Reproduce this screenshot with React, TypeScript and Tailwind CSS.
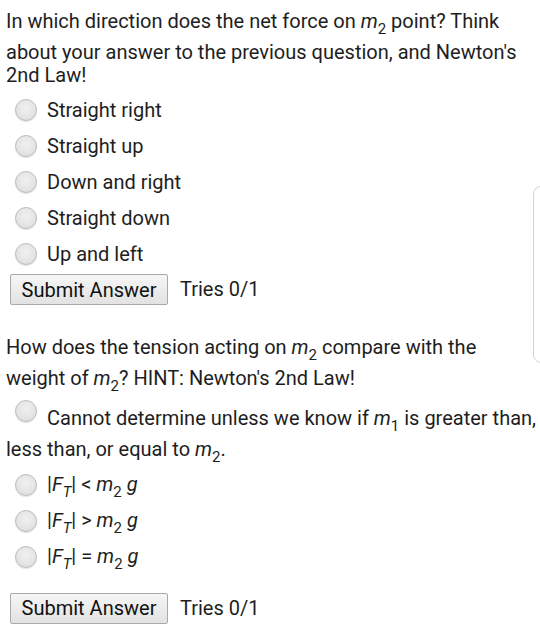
import type { ReactNode } from 'react';

const firstOptions = ['Straight right', 'Straight up', 'Down and right', 'Straight down', 'Up and left'];

// Italic variable with a subscript, e.g. m₂. By default the subscript pushes the line box down;
// `flat` keeps it out of the line height.
function Var({ v, sub, flat }: { v: string; sub?: string; flat?: boolean }) {
  return (
    <span>
      <i>{v}</i>
      {sub && (
        <sub className={`static text-[15px] align-[-6px] not-italic ${flat ? 'leading-[0px]' : 'leading-[23px]'}`}>
          {sub}
        </sub>
      )}
    </span>
  );
}

function Radio() {
  return (
    <span className="inline-block w-[22px] h-[22px] rounded-full border border-[#bcbcbc] bg-[radial-gradient(circle_at_50%_40%,#f0f0f0_0%,#e4e4e4_60%,#d6d6d6_100%)] shadow-[0_1px_1px_rgba(0,0,0,0.12)] shrink-0" />
  );
}

function Option({ children }: { children: ReactNode }) {
  return (
    <label className="flex items-center h-[36px] pl-[15px]">
      <Radio />
      <span className="ml-[10px]">{children}</span>
    </label>
  );
}

function SubmitRow() {
  return (
    <div className="flex items-center h-[31px] pl-[10px]">
      <button className="h-[31px] w-[158px] border border-[#a9a9a9] rounded-[2px] bg-[linear-gradient(#f6f6f6,#e2e2e2)] text-[#111] leading-none">
        Submit Answer
      </button>
      <span className="ml-[12px]">Tries 0/1</span>
    </div>
  );
}

function Force({ op }: { op: string }) {
  return (
    <span>
      |<i>F</i>
      <sub className="static text-[15px] leading-[0px] align-[-6px] italic">T</sub>| {op} <Var v="m" sub="2" flat />{' '}
      <i>g</i>
    </span>
  );
}

export default function App() {
  return (
    <div className="relative w-[540px] h-[643px] bg-white text-[#1e1e1e] text-[20px] leading-[23px] font-['Roboto','Liberation_Sans',sans-serif] overflow-hidden">
      <p className="pt-[10px] px-[6px]">
        In which direction does the net force on <Var v="m" sub="2" /> point? Think about your answer to the previous
        question, and Newton's 2nd Law!
      </p>

      <div className="mt-[5px]">
        {firstOptions.map((o) => (
          <Option key={o}>{o}</Option>
        ))}
      </div>

      <div className="mt-[2px]">
        <SubmitRow />
      </div>

      <p className="pt-[31px] px-[6px]">
        How does the tension acting on <Var v="m" sub="2" /> compare with the weight of <Var v="m" sub="2" />? HINT:
        Newton's 2nd Law!
      </p>

      <div className="mt-[6px] pl-[6px] leading-[29px]">
        <span className="inline-block align-middle ml-[9px] mr-[10px] relative top-[-5px]">
          <Radio />
        </span>
        Cannot determine unless we know if <Var v="m" sub="1" flat /> is greater than, less than, or equal to{' '}
        <Var v="m" sub="2" flat />.
      </div>

      <div className="mt-[3px]">
        <Option>
          <Force op="<" />
        </Option>
        <Option>
          <Force op=">" />
        </Option>
        <Option>
          <Force op="=" />
        </Option>
      </div>

      <div className="mt-[18px]">
        <SubmitRow />
      </div>

      {/* faint edge handle on the right side */}
      <div className="absolute left-[533px] top-[186px] w-[12px] h-[177px] border border-[#d4d4d4] rounded-l-[8px]" />
    </div>
  );
}
